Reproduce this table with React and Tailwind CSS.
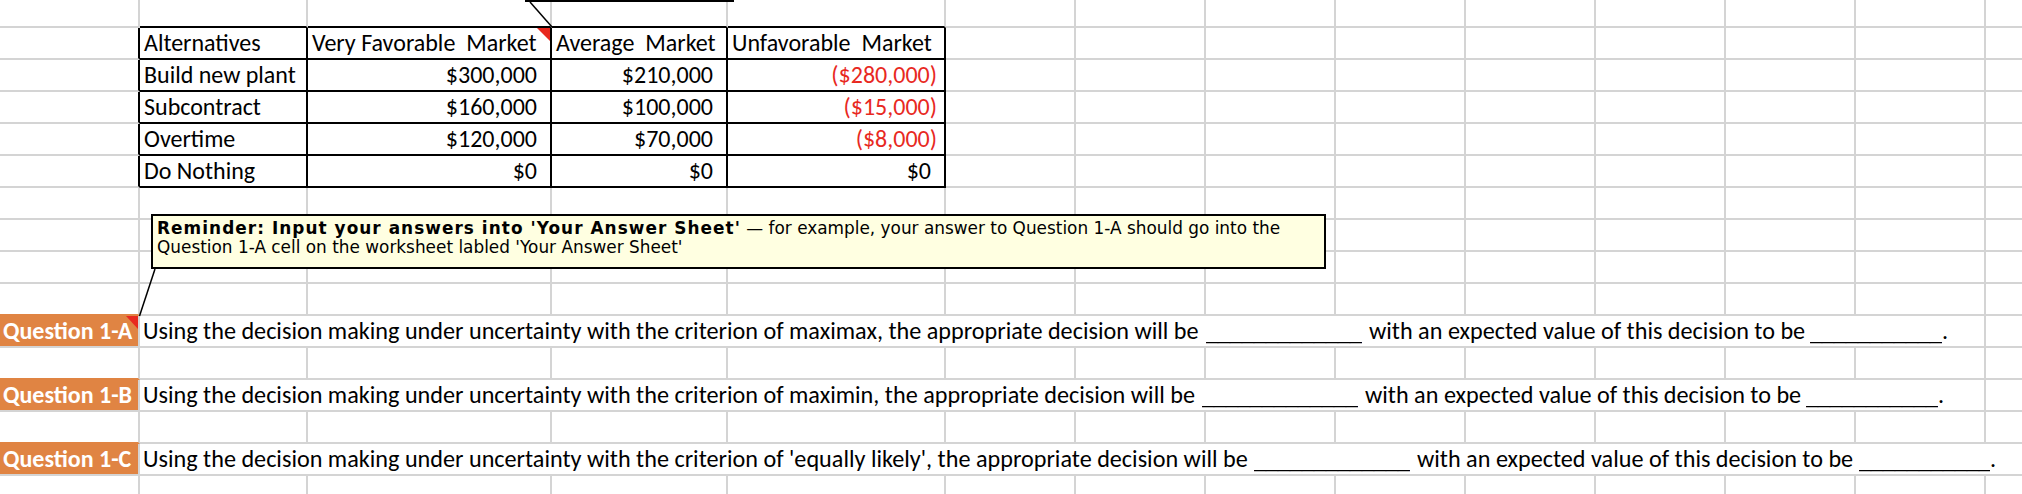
import React from "react";

const COLW = [
  "w-[140px]", "w-[168px]", "w-[244px]", "w-[176px]", "w-[218px]",
  "w-[130px]", "w-[130px]", "w-[130px]", "w-[130px]", "w-[130px]",
  "w-[130px]", "w-[130px]", "w-[130px]", "w-[130px]",
];
const ALL = [0, 1, 2, 3, 4, 5, 6, 7, 8, 9, 10, 11, 12, 13];

function Cell({ col, r = "g", b = "g", className = "", children }) {
  const rc = r === "k" ? "border-r-black" : r === "o" ? "border-r-[#e08443]" : "border-r-[#d4d4d4]";
  const bc = b === "k" ? "border-b-black" : b === "o" ? "border-b-[#e08443]" : "border-b-[#d4d4d4]";
  return (
    <div className={`${COLW[col]} shrink-0 h-full border-r-2 border-b-2 ${rc} ${bc} ${className}`}>
      {children}
    </div>
  );
}

function EmptyRow({ h = "h-[32px]", orangeA = false, tableTop = false }) {
  return (
    <div className={`flex ${h} shrink-0`}>
      {ALL.map((i) => (
        <Cell
          key={i}
          col={i}
          b={orangeA && i === 0 ? "o" : tableTop && i >= 1 && i <= 4 ? "k" : "g"}
        />
      ))}
    </div>
  );
}

const TXT = "leading-[30px] text-[24px] whitespace-pre";

function TableRow({ cells }) {
  return (
    <div className="flex h-[32px] shrink-0">
      {ALL.map((i) => {
        if (i === 0) return <Cell key={i} col={0} r="k" />;
        if (i >= 1 && i <= 4) {
          const c = cells[i - 1];
          let cls = `${TXT} pl-[4px]`;
          if (c.num) cls = `${TXT} text-right ${c.neg ? "pr-[7px] text-[#e8291f]" : "pr-[13px]"}`;
          return (
            <Cell key={i} col={i} r="k" b="k" className={cls}>
              {c.t}
            </Cell>
          );
        }
        return <Cell key={i} col={i} />;
      })}
    </div>
  );
}

const US = "[font-family:'Liberation_Sans',sans-serif] text-[21.6px]";

function QRow({ label, t1, w1, w2, w4, last }) {
  return (
    <div className="flex h-[32px] shrink-0">
      <Cell col={0} className="bg-[#e08443] pl-[3px] leading-[30px] text-[24px] font-bold text-white whitespace-nowrap">
        {label}
      </Cell>
      <div
        className={`${last ? "w-[1976px]" : "w-[1846px]"} shrink-0 h-full border-r-2 border-b-2 border-r-[#d4d4d4] border-b-[#d4d4d4] flex items-baseline pl-[3px] leading-[30px] text-[24.2px] whitespace-nowrap`}
      >
        <span className={`${w1} shrink-0`}>{t1} </span>
        <span className={`w-[156px] shrink-0 overflow-clip ${US}`}>_____________</span>
        <span className={`${w2} shrink-0 pl-[7px]`}>with an expected value of this decision to be </span>
        <span className={`${w4} shrink-0 overflow-clip ${US}`}>___________</span>
        <span>.</span>
      </div>
      {!last && <Cell col={13} />}
    </div>
  );
}

export default function App() {
  return (
    <div className="relative w-[2022px] h-[494px] overflow-hidden bg-white text-black [font-family:Carlito,Calibri,sans-serif]">
      <div className="flex flex-col">
        <EmptyRow h="h-[28px]" tableTop />
        <TableRow
          cells={[
            { t: "Alternatives" },
            { t: "Very Favorable  Market" },
            { t: "Average  Market" },
            { t: "Unfavorable  Market" },
          ]}
        />
        <TableRow
          cells={[
            { t: "Build new plant" },
            { t: "$300,000", num: true },
            { t: "$210,000", num: true },
            { t: "($280,000)", num: true, neg: true },
          ]}
        />
        <TableRow
          cells={[
            { t: "Subcontract" },
            { t: "$160,000", num: true },
            { t: "$100,000", num: true },
            { t: "($15,000)", num: true, neg: true },
          ]}
        />
        <TableRow
          cells={[
            { t: "Overtime" },
            { t: "$120,000", num: true },
            { t: "$70,000", num: true },
            { t: "($8,000)", num: true, neg: true },
          ]}
        />
        <TableRow
          cells={[
            { t: "Do Nothing" },
            { t: "$0", num: true },
            { t: "$0", num: true },
            { t: "$0", num: true },
          ]}
        />
        <EmptyRow />
        <EmptyRow />
        <EmptyRow />
        <EmptyRow orangeA />
        <QRow
          label="Question 1-A"
          t1="Using the decision making under uncertainty with the criterion of maximax, the appropriate decision will be"
          w1="w-[1063px]"
          w2="w-[448px]"
          w4="w-[132px]"
        />
        <EmptyRow orangeA />
        <QRow
          label="Question 1-B"
          t1="Using the decision making under uncertainty with the criterion of maximin, the appropriate decision will be"
          w1="w-[1059px]"
          w2="w-[448px]"
          w4="w-[132px]"
        />
        <EmptyRow orangeA />
        <QRow
          label="Question 1-C"
          t1="Using the decision making under uncertainty with the criterion of 'equally likely', the appropriate decision will be"
          w1="w-[1111px]"
          w2="w-[449px]"
          w4="w-[131px]"
          last
        />
        <EmptyRow />
      </div>

      <svg className="pointer-events-none absolute left-0 top-0" width="2022" height="494">
        <line x1="525" y1="1" x2="734" y2="1" stroke="black" strokeWidth="2" />
        <line x1="530" y1="2" x2="552" y2="27" stroke="black" strokeWidth="1.5" />
        <line x1="155" y1="269" x2="139.5" y2="316" stroke="black" strokeWidth="1.5" />
        <polygon points="537,28 550,28 550,41" fill="#e8291f" />
        <polygon points="126,316 138,316 138,329" fill="#e8291f" />
      </svg>

      <div className="absolute left-[151px] top-[214px] w-[1175px] h-[55px] border-2 border-black bg-[#ffffe1] pl-[4px] pt-[3px] text-[16.9px] leading-[19px] text-black whitespace-nowrap [font-family:'DejaVu_Sans',sans-serif]">
        <div>
          <span className="font-bold tracking-[1.05px]">Reminder: Input your answers into 'Your Answer Sheet'</span> — for example, your answer to Question 1-A should go into the
        </div>
        <div>Question 1-A cell on the worksheet labled 'Your Answer Sheet'</div>
      </div>
    </div>
  );
}
